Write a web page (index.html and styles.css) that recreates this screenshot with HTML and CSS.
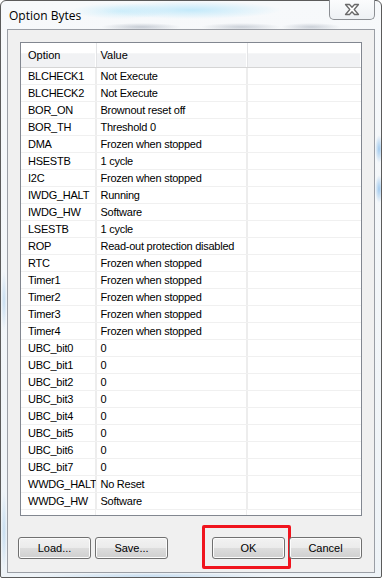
FILE: index.html
```html
<!DOCTYPE html>
<html lang="en">
  <head>
    <meta charset="UTF-8" />
    <title>Option Bytes</title>
    <link rel="stylesheet" href="styles.css">
  </head>
  <body>
    <div class="window">
      <!-- Title bar -->
      <div class="titlebar">
        <span class="title">Option Bytes</span>
        <button class="close-btn">
          <svg width="18" height="13" viewBox="0 0 18 13">
            <path d="M2.5 1.5 H6.5 L9 4.3 L11.5 1.5 H15.5 L11.2 6.5 L15.5 11.5 H11.5 L9 8.7 L6.5 11.5 H2.5 L6.8 6.5 Z"
                  fill="#ffffff" stroke="#6a6a6a" stroke-width="1.3" stroke-linejoin="round" />
          </svg>
        </button>
      </div>

      <!-- Client area -->
      <div class="client">
        <div class="list">
          <table>
            <colgroup>
              <col class="col-option">
              <col class="col-value">
              <col>
            </colgroup>
            <thead>
              <tr>
                <th>Option</th>
                <th class="val">Value</th>
                <th></th>
              </tr>
            </thead>
            <tbody>
              <tr><td>BLCHECK1</td><td class="val">Not Execute</td><td></td></tr>
              <tr><td>BLCHECK2</td><td class="val">Not Execute</td><td></td></tr>
              <tr><td>BOR_ON</td><td class="val">Brownout reset off</td><td></td></tr>
              <tr><td>BOR_TH</td><td class="val">Threshold 0</td><td></td></tr>
              <tr><td>DMA</td><td class="val">Frozen when stopped</td><td></td></tr>
              <tr><td>HSESTB</td><td class="val">1 cycle</td><td></td></tr>
              <tr><td>I2C</td><td class="val">Frozen when stopped</td><td></td></tr>
              <tr><td>IWDG_HALT</td><td class="val">Running</td><td></td></tr>
              <tr><td>IWDG_HW</td><td class="val">Software</td><td></td></tr>
              <tr><td>LSESTB</td><td class="val">1 cycle</td><td></td></tr>
              <tr><td>ROP</td><td class="val">Read-out protection disabled</td><td></td></tr>
              <tr><td>RTC</td><td class="val">Frozen when stopped</td><td></td></tr>
              <tr><td>Timer1</td><td class="val">Frozen when stopped</td><td></td></tr>
              <tr><td>Timer2</td><td class="val">Frozen when stopped</td><td></td></tr>
              <tr><td>Timer3</td><td class="val">Frozen when stopped</td><td></td></tr>
              <tr><td>Timer4</td><td class="val">Frozen when stopped</td><td></td></tr>
              <tr><td>UBC_bit0</td><td class="val">0</td><td></td></tr>
              <tr><td>UBC_bit1</td><td class="val">0</td><td></td></tr>
              <tr><td>UBC_bit2</td><td class="val">0</td><td></td></tr>
              <tr><td>UBC_bit3</td><td class="val">0</td><td></td></tr>
              <tr><td>UBC_bit4</td><td class="val">0</td><td></td></tr>
              <tr><td>UBC_bit5</td><td class="val">0</td><td></td></tr>
              <tr><td>UBC_bit6</td><td class="val">0</td><td></td></tr>
              <tr><td>UBC_bit7</td><td class="val">0</td><td></td></tr>
              <tr><td>WWDG_HALT</td><td class="val">No Reset</td><td></td></tr>
              <tr><td>WWDG_HW</td><td class="val">Software</td><td></td></tr>
            </tbody>
          </table>
        </div>

        <!-- Buttons -->
        <div class="buttons">
          <button class="btn">Load...</button>
          <button class="btn">Save...</button>
          <div class="spacer"></div>
          <button class="btn ok">OK<span class="highlight"></span></button>
          <button class="btn">Cancel</button>
        </div>
      </div>
    </div>
  </body>
</html>
```

FILE: styles.css
```css
/* General styles */
html, body {
    margin: 0;
    padding: 0;
}

body {
    width: 382px;
    height: 578px;
    overflow: hidden;
    font-family: "Liberation Sans", Arial, sans-serif;
    font-size: 11px;
    color: #000;
    background: #ffffff;
}

/* Aero-like window frame */
.window {
    box-sizing: border-box;
    width: 382px;
    height: 578px;
    border: 1px solid #5b5b5b;
    border-radius: 6px 6px 2px 2px;
    padding: 0 6px 4px 6px;
    display: flex;
    flex-direction: column;
    background:
        radial-gradient(ellipse 90px 9px at 190px 9px, rgba(190, 232, 250, 0.9), rgba(190, 232, 250, 0)),
        radial-gradient(ellipse 50px 8px at 120px 10px, rgba(200, 236, 250, 0.8), rgba(200, 236, 250, 0)),
        radial-gradient(ellipse 40px 4px at 140px 26px, rgba(150, 160, 175, 0.5), rgba(150, 160, 175, 0)),
        radial-gradient(ellipse 40px 4px at 240px 26px, rgba(150, 160, 175, 0.45), rgba(150, 160, 175, 0)),
        radial-gradient(ellipse 30px 4px at 310px 26px, rgba(150, 160, 175, 0.45), rgba(150, 160, 175, 0)),
        radial-gradient(ellipse 4px 14px at 378px 148px, rgba(140, 190, 235, 0.8), rgba(140, 190, 235, 0)),
        radial-gradient(ellipse 4px 14px at 378px 188px, rgba(140, 190, 235, 0.8), rgba(140, 190, 235, 0)),
        radial-gradient(ellipse 3px 30px at 3px 300px, rgba(170, 205, 235, 0.6), rgba(170, 205, 235, 0)),
        radial-gradient(ellipse 3px 40px at 3px 530px, rgba(170, 205, 235, 0.6), rgba(170, 205, 235, 0)),
        radial-gradient(ellipse 120px 3px at 150px 575px, rgba(170, 205, 235, 0.6), rgba(170, 205, 235, 0)),
        linear-gradient(#f7f9fb, #eef3f7);
}

/* Title bar */
.titlebar {
    height: 28px;
    display: flex;
    justify-content: space-between;
    align-items: flex-start;
}

.title {
    font-family: "Open Sans", "Liberation Sans", sans-serif;
    font-size: 12px;
    padding: 6px 0 0 2px;
    color: #000;
}

.close-btn {
    width: 46px;
    height: 20px;
    margin: -1px 0 0 0;
    padding: 0;
    border: 1px solid #8c8f94;
    border-top: none;
    border-radius: 0 0 5px 5px;
    background: linear-gradient(#fbfcfd, #eef1f4);
    display: flex;
    align-items: center;
    justify-content: center;
}

/* Client area */
.client {
    flex: 1;
    border: 1px solid #9a9ea5;
    background: #f0f0f0;
    padding: 12px 12px 0 12px;
    display: flex;
    flex-direction: column;
}

/* List view */
.list {
    height: 472px;
    border: 1px solid #828790;
    background-color: #fff;
    background-image:
        linear-gradient(to right, transparent 74px, #ededed 74px, #ededed 75px, transparent 75px,
                        transparent 225px, #ededed 225px, #ededed 226px, transparent 226px);
    overflow: hidden;
}

table {
    width: 100%;
    border-collapse: collapse;
    table-layout: fixed;
}

.col-option {
    width: 75px;
}

.col-value {
    width: 151px;
}

th {
    height: 24px;
    padding: 0 0 0 7px;
    font-weight: normal;
    text-align: left;
    background: linear-gradient(#ffffff 0%, #ffffff 40%, #f1f2f4 45%, #f1f2f4 100%);
    border-bottom: 1px solid #d5d5d5;
    border-right: 1px solid #e3e4e6;
    box-shadow: inset -1px 0 0 #ffffff;
}

th:last-child {
    border-right: none;
}

td {
    height: 16px;
    padding: 0 0 0 7px;
    border-bottom: 1px solid #f0f0f0;
    border-right: 1px solid #ededed;
    white-space: nowrap;
    overflow: hidden;
    line-height: 16px;
    letter-spacing: -0.25px;
}

td:last-child {
    border-right: none;
}

th.val,
td.val {
    padding-left: 4px;
}

/* Buttons row */
.buttons {
    display: flex;
    gap: 4px;
    margin: 21px 0 0 -2px;
    padding-right: 0;
}

.spacer {
    flex: 1;
}

.btn {
    position: relative;
    width: 73px;
    height: 22px;
    padding: 0;
    font-family: "Liberation Sans", Arial, sans-serif;
    font-size: 11px;
    color: #000;
    border: 1px solid #707070;
    border-radius: 3px;
    background: linear-gradient(#f2f2f2 0%, #ebebeb 50%, #dddddd 51%, #cfcfcf 100%);
    box-shadow: inset 0 0 0 1px #fcfcfc;
}

/* Red highlight around OK */
.highlight {
    position: absolute;
    left: -11px;
    top: -13px;
    width: 83px;
    height: 38px;
    border: 3px solid #f0141e;
    border-radius: 2px;
}
```
